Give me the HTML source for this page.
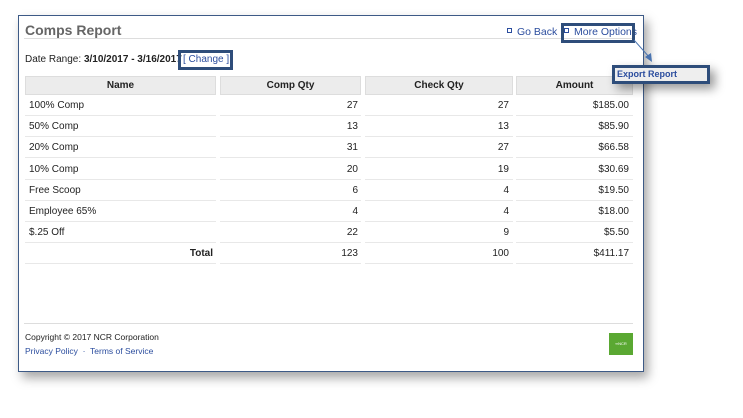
<!DOCTYPE html>
<html><head><style>
body{margin:0;width:743px;height:418px;background:#fff;position:relative;font-family:"Liberation Sans",Arial,sans-serif;overflow:hidden}
.frame{position:absolute;left:18px;top:15px;width:624px;height:355px;border:1px solid #3d5a86;background:#fff;box-shadow:4px 6px 10px rgba(0,0,0,.35)}
.a{position:absolute;white-space:nowrap}
.title{left:25px;top:22px;font-size:14px;font-weight:bold;color:#666}
.hr{position:absolute;background:#ddd;height:1px}
.blue{color:#2b4d9e}
.sq{display:inline-block;width:3px;height:3px;border:1px solid #2b4d9e;margin-right:5px;vertical-align:2px}
.box{position:absolute;border:3px solid #2e4d7a}
.th{position:absolute;top:76px;height:19px;background:#ececec;border:1px solid #ddd;box-sizing:border-box;font-size:10px;font-weight:bold;text-align:center;line-height:18px;color:#222}
.td{position:absolute;font-size:10px;color:#222;white-space:nowrap}
</style></head><body>
<div class="frame"></div>
<div class="a title">Comps Report</div>
<div class="hr" style="left:24px;top:38px;width:609px"></div>
<div class="a blue" style="left:507px;top:26px;font-size:10.5px"><span class="sq"></span>Go Back</div>
<div class="a blue" style="left:564px;top:26px;font-size:10.5px"><span class="sq"></span>More Options</div>
<div class="box" style="left:561px;top:23px;width:68px;height:14px"></div>
<div class="a" style="left:25px;top:54px;font-size:10px;color:#222">Date Range: <b>3/10/2017 - 3/16/2017</b></div>
<div class="a blue" style="left:183px;top:54px;font-size:10px">[ Change ]</div>
<div class="box" style="left:178px;top:50px;width:49px;height:14px"></div>
<div class="th" style="left:25px;width:191px">Name</div>
<div class="th" style="left:220px;width:141px">Comp Qty</div>
<div class="th" style="left:365px;width:148px">Check Qty</div>
<div class="th" style="left:516px;width:117px">Amount</div>
<div id="rows"></div>
<script>
var d=[["100% Comp",27,27,"$185.00"],["50% Comp",13,13,"$85.90"],["20% Comp",31,27,"$66.58"],["10% Comp",20,19,"$30.69"],["Free Scoop",6,4,"$19.50"],["Employee 65%",4,4,"$18.00"],["$.25 Off",22,9,"$5.50"],["Total",123,100,"$411.17"]];
var h="";d.forEach(function(r,i){var y=100+i*21.2;var tot=i==7;
h+='<div class="td" style="'+(tot?'left:0;width:213px;text-align:right;font-weight:bold':'left:29px')+';top:'+y+'px">'+r[0]+'</div>';
h+='<div class="td" style="left:220px;width:138px;text-align:right;top:'+y+'px">'+r[1]+'</div>';
h+='<div class="td" style="left:365px;width:144px;text-align:right;top:'+y+'px">'+r[2]+'</div>';
h+='<div class="td" style="left:516px;width:113px;text-align:right;top:'+y+'px">'+r[3]+'</div>';
[[25,191],[220,141],[365,148],[516,117]].forEach(function(c){h+='<div class="hr" style="left:'+c[0]+'px;width:'+c[1]+'px;top:'+(y+15)+'px;background:#e8e8e8"></div>'});
});document.getElementById("rows").innerHTML=h;
</script>
<div class="hr" style="left:24px;top:323px;width:609px"></div>
<div class="a" style="left:25px;top:332px;font-size:8.5px;color:#222">Copyright © 2017 NCR Corporation</div>
<div class="a blue" style="left:25px;top:346px;font-size:8.5px">Privacy Policy &nbsp;·&nbsp; Terms of Service</div>
<div class="a" style="left:609px;top:333px;width:24px;height:22px;background:#5aa832;color:#fff;font-size:4px;line-height:22px;text-align:center">∞NCR</div>
<svg class="a" style="left:630px;top:36px" width="30" height="30"><line x1="4" y1="4" x2="20" y2="22" stroke="#4a74b0" stroke-width="1"/><polygon points="22,26 15,21 21,17" fill="#4a74b0"/></svg>
<div class="a" style="left:612px;top:65px;width:90px;height:13px;background:#eee;border:3px solid #2e4d7a;box-shadow:5px 5px 10px rgba(0,0,0,.4);font-size:9px;font-weight:bold;line-height:13px;color:#2b4d9e;padding-left:2px;box-sizing:content-box">Export Report</div>
</body></html>
